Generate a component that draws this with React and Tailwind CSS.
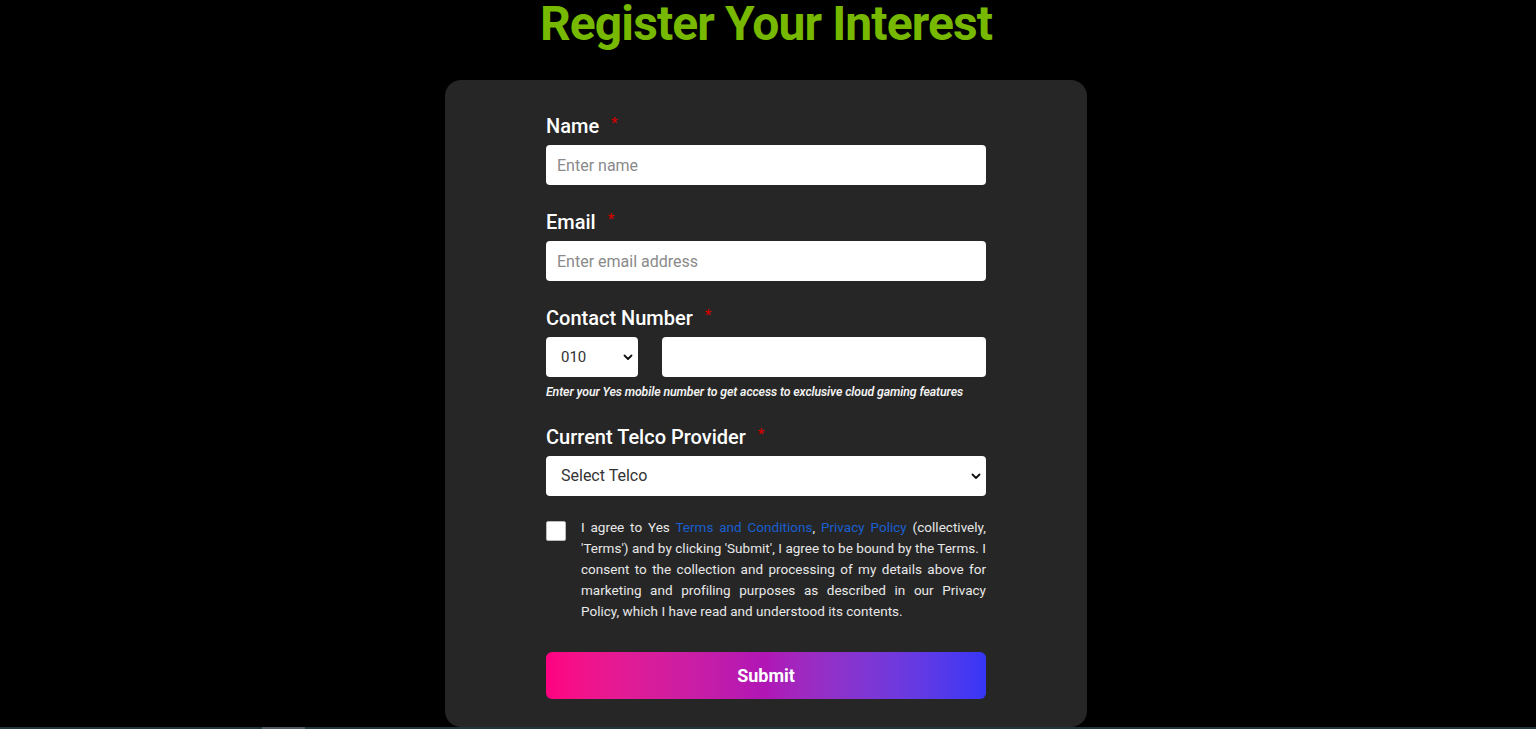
import React from 'react';

const font = { fontFamily: 'Roboto, "Noto Sans", sans-serif' };

function Chevron() {
  return (
    <svg
      className="pointer-events-none absolute right-[5px] top-1/2 -translate-y-1/2"
      width="10"
      height="10"
      viewBox="0 0 10 10"
      fill="none"
    >
      <path d="M1.5 3.5 L5 7 L8.5 3.5" stroke="#111" strokeWidth="1.8" strokeLinecap="round" strokeLinejoin="round" />
    </svg>
  );
}

function Label({ children }) {
  return (
    <label className="mb-[5px] flex h-[28px] items-center text-[20px] font-medium leading-[28px] text-white">
      {children}
      <span className="ml-[12px] -mt-[7px] text-[15px] text-[#d40000]">*</span>
    </label>
  );
}

export default function App() {
  return (
    <div className="flex min-h-screen flex-col bg-black" style={font}>
      <div className="flex flex-1 flex-col items-center overflow-hidden pr-[4px]">
        <h1 className="mt-[-2px] text-[48px] font-bold leading-[52px] tracking-[-0.9px] text-[#76b900]">
          Register Your Interest
        </h1>

        <div className="mt-[30px] w-[642px] rounded-2xl bg-[#262626] px-[101px] pb-[28px] pt-[32px]">
          {/* Name */}
          <Label>Name</Label>
          <input
            className="mb-[23px] h-[40px] w-full rounded-[4px] bg-white px-[11px] text-[16px] text-[#333] placeholder-[#8a8a8a] outline-none"
            placeholder="Enter name"
          />

          {/* Email */}
          <Label>Email</Label>
          <input
            className="mb-[23px] h-[40px] w-full rounded-[4px] bg-white px-[11px] text-[16px] text-[#333] placeholder-[#8a8a8a] outline-none"
            placeholder="Enter email address"
          />

          {/* Contact number */}
          <Label>Contact Number</Label>
          <div className="flex gap-[24px]">
            <div className="relative w-[92px]">
              <select className="h-[40px] w-full appearance-none rounded-[4px] bg-white pl-[15px] text-[15px] text-[#333] outline-none">
                <option>010</option>
              </select>
              <Chevron />
            </div>
            <input className="h-[40px] flex-1 rounded-[4px] bg-white px-[11px] text-[16px] outline-none" />
          </div>
          <p className="mt-[7px] text-[12.3px] font-semibold italic leading-[16px] tracking-[-0.1px] text-[#f2f2f2]">
            Enter your Yes mobile number to get access to exclusive cloud gaming features
          </p>

          {/* Telco */}
          <div className="mt-[23px]">
            <Label>Current Telco Provider</Label>
          </div>
          <div className="relative">
            <select className="h-[40px] w-full appearance-none rounded-[4px] bg-white pl-[15px] text-[16px] text-[#333] outline-none">
              <option>Select Telco</option>
            </select>
            <Chevron />
          </div>

          {/* Agreement */}
          <div className="mt-[21px] flex gap-[15px]">
            <div className="mt-[4px] h-[20px] w-[20px] shrink-0 rounded-[2px] border border-[#bbb] bg-white" />
            <p className="text-justify text-[13.5px] leading-[21px] tracking-[0.02px] text-[#e8e8e8]">
              I agree to Yes <span className="text-[#1a5fd0]">Terms and Conditions</span>,{' '}
              <span className="text-[#1a5fd0]">Privacy Policy</span> (collectively, 'Terms') and by clicking
              'Submit', I agree to be bound by the Terms. I consent to the collection and processing of my
              details above for marketing and profiling purposes as described in our Privacy Policy, which I
              have read and understood its contents.
            </p>
          </div>

          <button className="mt-[30px] h-[47px] w-full rounded-[6px] bg-gradient-to-r from-[#ff0080] via-[#b015b5] to-[#3636f7] text-[18px] font-bold text-white">
            Submit
          </button>
        </div>
      </div>
      <div className="flex h-[2px] shrink-0 bg-[#22363e]">
        <div className="ml-[262px] w-[43px] bg-[#4a5a60]" />
      </div>
    </div>
  );
}
